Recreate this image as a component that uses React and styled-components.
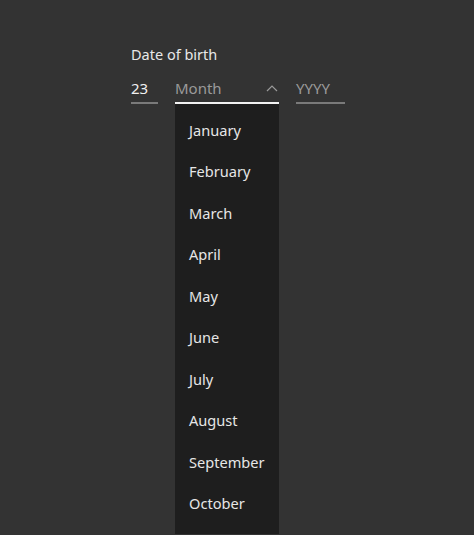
import React, { useState } from 'react';
import styled, { createGlobalStyle } from 'styled-components';

const GlobalStyle = createGlobalStyle`
  html, body {
    margin: 0;
    padding: 0;
    background: #333333;
    font-family: "Noto Sans", "Open Sans", sans-serif;
    overflow: hidden;
  }
`;

const Page = styled.div`
  width: 474px;
  height: 535px;
  box-sizing: border-box;
  padding: 44px 0 0 131px;
`;

const Label = styled.div`
  color: #e8e8e8;
  font-size: 14.5px;
  line-height: 20px;
  margin-bottom: 14px;
`;

const Fields = styled.div`
  display: flex;
  gap: 17px;
  align-items: flex-start;
`;

const Field = styled.div`
  position: relative;
  width: ${p => p.$width}px;
  height: 26px;
  box-sizing: border-box;
  border-bottom: ${p => (p.$active ? '2px solid #f2f2f2' : '2px solid #7a7a7a')};
  display: flex;
  align-items: center;
  justify-content: space-between;
  color: ${p => (p.$placeholder ? '#9a9a9a' : '#f0f0f0')};
  font-size: 15px;
  padding-bottom: 5px;
`;

const Chevron = styled.svg`
  width: 12px;
  height: 8px;
  margin-right: 1px;
`;

const Menu = styled.ul`
  position: absolute;
  top: 26px;
  left: 0;
  width: 104px;
  height: 430px;
  margin: 0;
  padding: 5px 0 0;
  box-sizing: border-box;
  overflow: hidden;
  list-style: none;
  background: #1e1e1e;
`;

const Item = styled.li`
  height: 41.5px;
  display: flex;
  align-items: center;
  padding-left: 14px;
  color: #e6e6e6;
  font-size: 14.6px;
`;

// only the months that fit in the open list are shown
const months = ['January', 'February', 'March', 'April', 'May', 'June', 'July', 'August', 'September', 'October'];

export default function App() {
  const [open] = useState(true);
  return (
    <>
      <GlobalStyle />
      <Page>
        <Label>Date of birth</Label>
        <Fields>
          <Field $width={27}>23</Field>
          <Field $width={104} $active $placeholder>
            Month
            <Chevron viewBox="0 0 12 8">
              <path d="M1 7 L6 2 L11 7" fill="none" stroke="#9a9a9a" strokeWidth="1.2" />
            </Chevron>
            {open && (
              <Menu>
                {months.map(m => <Item key={m}>{m}</Item>)}
              </Menu>
            )}
          </Field>
          <Field $width={49} $placeholder>YYYY</Field>
        </Fields>
      </Page>
    </>
  );
}
